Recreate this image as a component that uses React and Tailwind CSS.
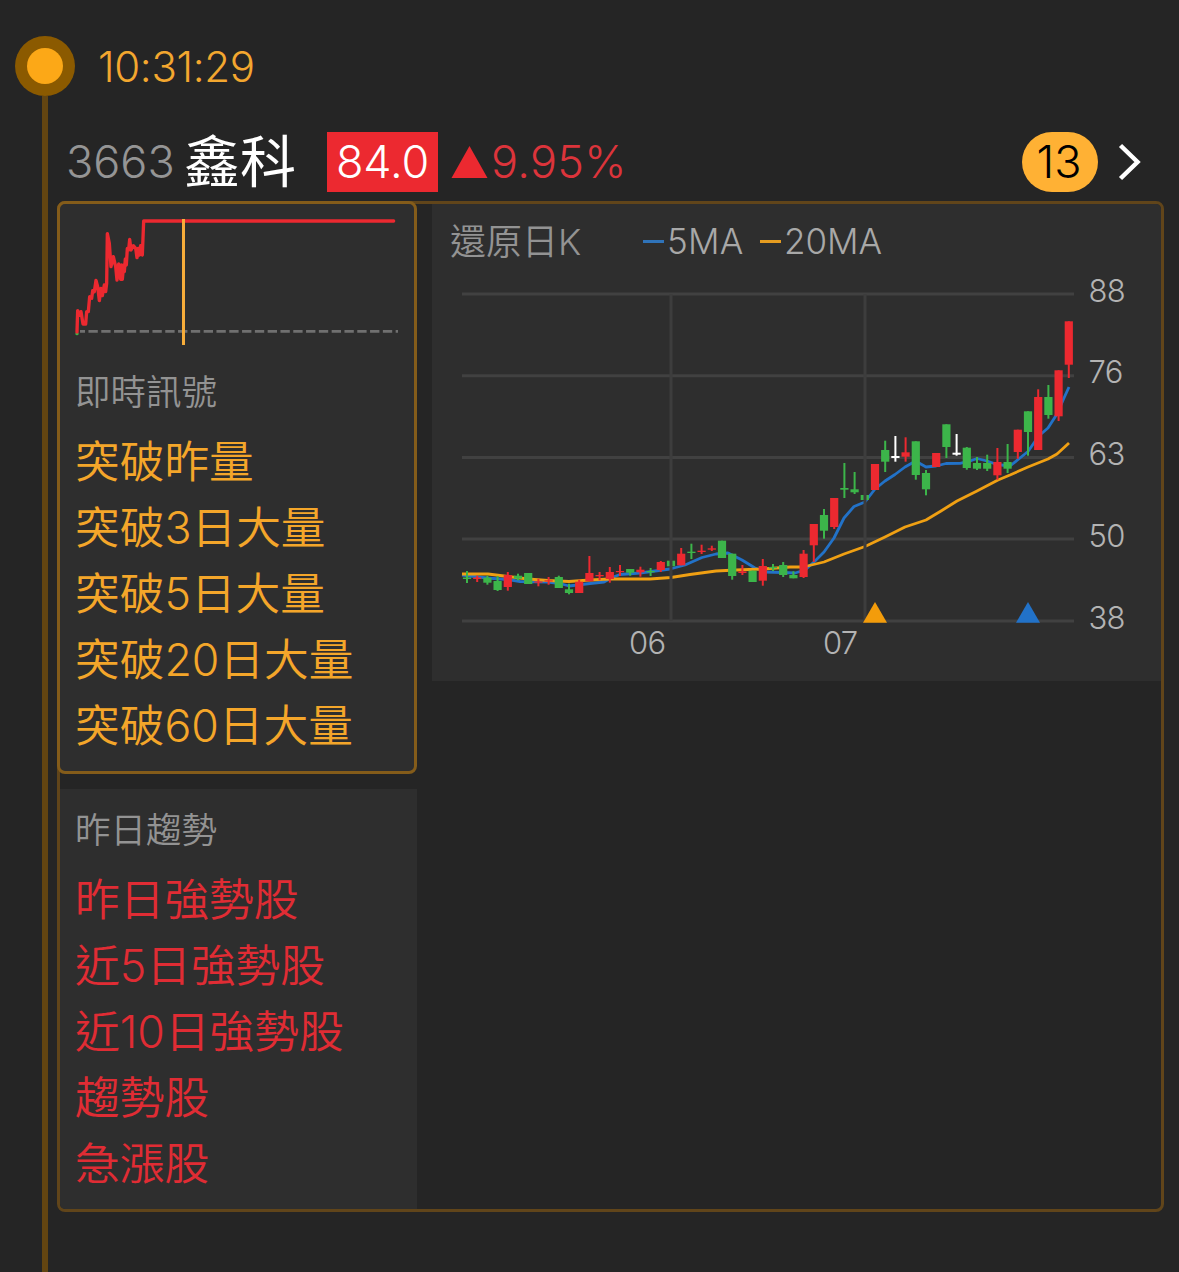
import React from "react";

const RED = "#ec2930";
const GREEN = "#3cb54a";
const WHITE = "#ffffff";

const FONT = "font-['Inter','Noto_Sans_CJK_TC',sans-serif]";

// [colour, body top, body bottom, wick top, wick bottom]
const CANDLES = [
  [GREEN, 577.5, 579, 571, 583],
  [RED, 577.5, 579, 575.7, 582],
  [GREEN, 577.7, 582.7, 575.7, 584.7],
  [GREEN, 581, 590, 576, 591],
  [RED, 575, 587, 572, 590.7],
  [GREEN, 575.7, 578.7, 573.7, 580.3],
  [GREEN, 573, 584, 573, 584],
  [RED, 581.5, 582.7, 578.7, 586.3],
  [RED, 580.3, 581.5, 577, 584.7],
  [GREEN, 577, 588, 575.7, 588],
  [GREEN, 589.3, 593, 583.7, 594.3],
  [RED, 581.7, 593, 579.7, 593],
  [RED, 573, 581.3, 556, 581.3],
  [RED, 575, 576.3, 572, 580.3],
  [RED, 572, 579, 567, 582.7],
  [RED, 571, 572.2, 565, 576],
  [GREEN, 569, 572.7, 569, 575.7],
  [RED, 569.7, 572.3, 566.7, 576.7],
  [GREEN, 571, 572.3, 568, 576],
  [RED, 562, 570, 561, 572],
  [GREEN, 560.7, 566.3, 560.7, 566.3],
  [RED, 553.7, 565.3, 548, 565.3],
  [GREEN, 551.7, 553, 543.7, 559],
  [RED, 550.7, 552, 544.7, 554],
  [RED, 548.3, 549.7, 545.7, 551],
  [GREEN, 540.7, 558, 540.7, 558],
  [GREEN, 553.7, 576, 553.7, 579.7],
  [RED, 571.5, 573, 565, 575],
  [GREEN, 570.7, 582, 570.7, 582],
  [RED, 566, 580.7, 559, 585.7],
  [GREEN, 567, 568.3, 564, 571],
  [GREEN, 565, 575, 562, 577],
  [GREEN, 575, 578.3, 571.3, 578.3],
  [RED, 553.7, 577, 550, 578],
  [RED, 524, 545.3, 524, 562],
  [GREEN, 515, 530.7, 509, 538.7],
  [RED, 498, 527, 498, 529],
  [GREEN, 488, 489.7, 463, 498],
  [GREEN, 489.3, 492.3, 472, 494],
  [GREEN, 495, 500, 495, 500],
  [RED, 464, 490, 464, 490],
  [GREEN, 450, 461.7, 440.7, 472],
  [WHITE, 456, 458, 436, 461.7],
  [RED, 452.3, 456.7, 437.3, 461.7],
  [GREEN, 441.3, 475, 441.3, 479.7],
  [GREEN, 473, 489.3, 470, 495.3],
  [RED, 453, 467, 453, 467],
  [GREEN, 424.3, 447, 424.3, 458],
  [WHITE, 452.7, 454.7, 434, 455.7],
  [GREEN, 447.7, 468, 447, 469.7],
  [GREEN, 463, 468.7, 457, 470],
  [GREEN, 463, 468.7, 454.7, 471],
  [RED, 462, 475.3, 448, 479.7],
  [GREEN, 462, 468.7, 444, 473],
  [RED, 429.7, 452, 429.7, 458.7],
  [GREEN, 411.3, 432, 411.3, 455.7],
  [RED, 397, 450, 389.3, 450],
  [GREEN, 397, 415, 385, 418.7],
  [RED, 370.3, 416.3, 370.3, 421],
  [RED, 321.3, 364.7, 321.3, 378],
];

const MA5 =
  "462,575 487,578 508,579.5 520,581.5 548,582 560,583.5 569,586 590,583.5 604,582 612,577.5 620,574.5 640,573 655,571 670,569 685,565 702,557.5 716,554 728,553 742,560 755,568 765,572 783,572.5 795,573 805,570 814,562 824,552 834,538 844,518 854,506.5 865,502 875,489 885,481 895,474.5 905,467 913,462.5 919,463 926,467 936,466 946,463.5 960,463.3 970,461 977,458.5 987,461 997,464.5 1010,466 1020,458 1028,451.5 1036,440 1041,434 1048,428 1057,414 1064,398 1069,387";
const MA20 =
  "462,574 488,574 508,576.5 528,579 548,580.5 569,581.5 590,580 610,579 650,579 671,577.5 690,574.5 716,571 736,570 763,569 790,567 803,567 824,562 844,554 865,546.5 885,537 905,527 926,520 941,511 957,501 977,491 998,480 1010,475 1028,467 1048,459 1057,454 1069,443";

const SPARK =
  "66,396 68,332 74,346 78,335 84,372 92,372 95,335 100,335 104,290 110,295 113,272 118,275 123,241 128,260 133,302 138,265 142,287 148,255 152,275 155,250 157,101 163,130 168,200 175,170 182,200 186,240 191,192 197,238 199,195 202,238 206,195 208,215 211,177 214,195 217,145 221,150 224,118 228,150 235,137 242,145 246,173 250,145 253,165 257,137 262,165 266,63 1016,63";

const SIGNALS = ["突破昨量", "突破3日大量", "突破5日大量", "突破20日大量", "突破60日大量"];
const TRENDS = ["昨日強勢股", "近5日強勢股", "近10日強勢股", "趨勢股", "急漲股"];
const LEVELS = [
  [294, "88"],
  [375.7, "76"],
  [457.5, "63"],
  [539, "50"],
  [621, "38"],
];

function Sparkline() {
  return (
    <svg className="block h-[132px] w-[324px]" viewBox="57 45 972 396">
      <path d="M75 394H1030" stroke="#707070" strokeWidth="8" strokeDasharray="28 10.4" strokeDashoffset="13" />
      <circle cx="66" cy="401" r="5" fill={GREEN} />
      <polyline points={SPARK} fill="none" stroke={RED} strokeWidth="10" strokeLinejoin="round" strokeLinecap="round" />
      <path d="M385.500 57V435" stroke="#f7ad3a" strokeWidth="9" />
    </svg>
  );
}

function CandleChart() {
  return (
    <svg className="block h-[396px] w-[729px]" viewBox="432 270 729 396">
      {LEVELS.map(([y]) => (
        <path key={y} d={`M462 ${y}H1074`} stroke="#414141" strokeWidth="3" />
      ))}
      <polyline points={MA5} fill="none" stroke="#2272c8" strokeWidth="2.8" strokeLinejoin="round" />
      <polyline points={MA20} fill="none" stroke="#f0a013" strokeWidth="2.8" strokeLinejoin="round" />
      {CANDLES.map(([color, top, bottom, high, low], i) => {
        const x = 467 + i * 10.2;
        return (
          <g key={i} fill={color}>
            <rect x={x - 1} y={high} width="2" height={low - high} />
            <rect x={x - 4.1} y={top} width="8.2" height={bottom - top} />
          </g>
        );
      })}
      <path d="M671 294V621M865 294V621" stroke="#3d3d3d" strokeWidth="3" />
      <path d="M863 622.800L875 602L887 622.800Z" fill="#f39c0b" />
      <path d="M1016 622.800L1028 602L1040 622.800Z" fill="#2272c8" />
      <g fill="#b3b3b3" fontSize="31" fontWeight="300" letterSpacing="-0.7">
        {LEVELS.map(([y, label]) => (
          <text key={label} x="1088.500" y={y + 7.5}>{label}</text>
        ))}
        <text x="629" y="654">06</text>
        <text x="823" y="654">07</text>
      </g>
    </svg>
  );
}

function SignalList({ title, items, className }) {
  return (
    <div>
      <h2 className="h-9 text-[35.5px] leading-9 text-[#939393]">{title}</h2>
      <ul className={`mt-[18px] text-[44.7px] leading-[66px] ${className}`}>
        {items.map((item) => (
          <li key={item} className="h-[66px] whitespace-nowrap">{item}</li>
        ))}
      </ul>
    </div>
  );
}

export default function App() {
  return (
    <main className={`flex h-[1272px] w-[1179px] flex-col overflow-hidden bg-[#252525] font-light ${FONT}`}>
      <div className="flex h-full">
        <aside className="flex w-[57px] shrink-0 flex-col pl-[15px] pt-9">
          <div className="flex size-[60px] shrink-0 items-center justify-center rounded-full bg-[#8b5a00]">
            <div className="size-9 rounded-full bg-[#fca817]" />
          </div>
          <div className="ml-[27px] w-1.5 flex-1 bg-[#634511]" />
        </aside>

        <section className="w-[1107px] shrink-0">
          <time className="mt-9 block h-[60px] pl-[41px] text-[42px] leading-[62px] tracking-[-0.3px] text-[#f3a72f]">10:31:29</time>

          <header className="mt-9 flex h-[60px] items-center">
            <span className="w-[127px] pl-[9px] text-[45px] leading-[60px] text-[#959595]">3663</span>
            <h1 className="w-[143px] text-[56px] font-normal leading-[60px] text-white">鑫科</h1>
            <span className="flex h-[60px] w-[111px] items-center justify-center bg-[#ec2930] text-[45px] tracking-[-0.1px] text-white">84.0</span>
            <svg className="ml-[13px] h-[33px] w-[37px]" viewBox="0 0 37 33">
              <path d="M18.500 0L36.500 32H.5Z" fill={RED} />
            </svg>
            <span className="ml-[3px] text-[45px] leading-[60px] tracking-[0.3px] text-[#dc343b]">9.95%</span>
            <span className="ml-auto flex h-[60px] w-[76px] items-center justify-center rounded-full bg-[#ffb134] pr-0.5 text-[45px] text-black">13</span>
            <svg className="ml-[18px] mr-5 h-10 w-7" viewBox="0 0 28 40" fill="none">
              <path d="M4.500 3.500L21.500 20L4.500 36.500" stroke="white" strokeWidth="4.500" />
            </svg>
          </header>

          <div className="mt-[9px] flex h-[1011px] rounded-lg border-[3px] border-[#61451a]">
            <div className="flex w-[357px] shrink-0 flex-col">
              <div className="-ml-[3px] -mt-[3px] h-[573px] w-[360px] rounded-lg border-[3px] border-[#845c1a] bg-[#2e2e2e] pl-3.5 pt-[11px]">
                <Sparkline />
                <div className="pl-px pt-7 font-[350]">
                  <SignalList title="即時訊號" items={SIGNALS} className="text-[#f4a62a]" />
                </div>
              </div>
              <div className="mt-[15px] flex-1 rounded-bl-[5px] bg-[#2e2e2e] pl-[15px] pt-6 font-[350]">
                <SignalList title="昨日趨勢" items={TRENDS} className="text-[#e02c34]" />
              </div>
            </div>

            <div className="ml-[15px] h-[477px] w-[729px] rounded-tr-[5px] bg-[#2e2e2e]">
              <div className="flex h-[66px] items-center pt-[9px] text-[35px] leading-[60px] text-[#a8a8a8]">
                <span className="w-[211px] pl-[18px] text-[36px] font-[350] text-[#939393]">還原日K</span>
                <span className="mr-[3px] h-[3px] w-[21px] bg-[#2f73b9]" />
                <span className="-mt-0.5 w-[93px] tracking-[0.2px]">5MA</span>
                <span className="mr-[3px] h-[3px] w-[21px] bg-[#e59c20]" />
                <span className="-mt-0.5">20MA</span>
              </div>
              <CandleChart />
            </div>
          </div>
        </section>
      </div>
    </main>
  );
}
